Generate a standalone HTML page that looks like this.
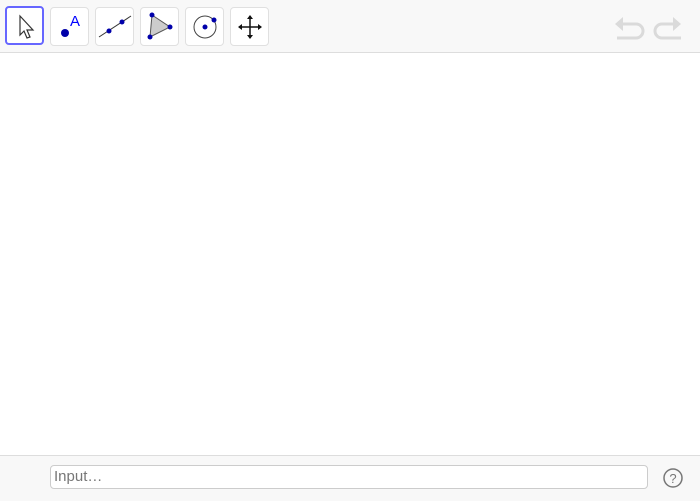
<!DOCTYPE html>
<html><head><style>
body{margin:0;width:700px;height:500px;overflow:hidden;background:#fff;font-family:"Liberation Sans",sans-serif;position:relative}
.tb{position:absolute;left:0;top:0;width:700px;height:52px;background:#f8f8f8;border-bottom:1px solid #ddd}
.b{position:absolute;top:7px;width:37px;height:37px;border:1px solid #e0e0e0;border-radius:4px;background:#fff}
.b svg{position:absolute;left:0;top:0}
.sel{border:2px solid #6666ff;width:35px;height:35px;top:6px}
.bot{position:absolute;left:0;top:455px;width:700px;height:45px;background:#f8f8f8;border-top:1px solid #ddd}
.in{position:absolute;left:50px;top:9px;border:1px solid #ccc;border-radius:4px;background:#fff;font-size:15px;color:#777;line-height:22px;padding-left:3px;box-sizing:border-box;width:598px;height:24px}
</style></head><body>
<div class="tb">
<div class="b sel" style="left:5px"><svg width="36" height="36"><path d="M13 8 L13 27 L17 23 L20 30 L23 29 L20 22 L26 22 Z" fill="#fff" stroke="#333" stroke-width="1.2"/></svg></div>
<div class="b" style="left:50px"><svg width="38" height="38"><circle cx="14" cy="25" r="4" fill="#0000aa"/><text x="19" y="18" font-size="15" fill="#0000ff" font-family="Liberation Sans">A</text></svg></div>
<div class="b" style="left:95px"><svg width="38" height="38"><line x1="3" y1="29" x2="35" y2="8" stroke="#333" stroke-width="1"/><circle cx="13" cy="23" r="2.5" fill="#0000aa"/><circle cx="26" cy="14" r="2.5" fill="#0000aa"/></svg></div>
<div class="b" style="left:140px"><svg width="38" height="38"><path d="M11 7 L29 19 L9 29 Z" fill="#ccc" stroke="#555"/><circle cx="11" cy="7" r="2.5" fill="#0000aa"/><circle cx="29" cy="19" r="2.5" fill="#0000aa"/><circle cx="9" cy="29" r="2.5" fill="#0000aa"/></svg></div>
<div class="b" style="left:185px"><svg width="38" height="38"><circle cx="19" cy="19" r="11" fill="none" stroke="#444"/><circle cx="19" cy="19" r="2.5" fill="#0000aa"/><circle cx="28" cy="12" r="2.5" fill="#0000aa"/></svg></div>
<div class="b" style="left:230px"><svg width="38" height="38"><path d="M19 8V30M8 19H30" stroke="#111" stroke-width="1.5"/><path d="M19 7l-3 4h6zM19 31l-3-4h6zM7 19l4-3v6zM31 19l-4-3v6z" fill="#111"/></svg></div>
<svg style="position:absolute;left:612px;top:14px" width="72" height="30"><g fill="none" stroke="#dadada" stroke-width="3"><path d="M8 10H24A7 7 0 0 1 24 24H5"/><path d="M66 10H50A7 7 0 0 0 50 24H69"/></g><path d="M3 10L11 3V17Z" fill="#dadada"/><path d="M69 10L61 3V17Z" fill="#dadada"/></svg>
</div>
<div class="bot"><div class="in">Input…</div>
<svg style="position:absolute;left:662px;top:11px" width="22" height="22"><circle cx="11" cy="11" r="9" fill="none" stroke="#777" stroke-width="1.5"/><text x="11" y="16" font-size="13" fill="#777" text-anchor="middle" font-family="Liberation Sans">?</text></svg>
</div>
</body></html>
